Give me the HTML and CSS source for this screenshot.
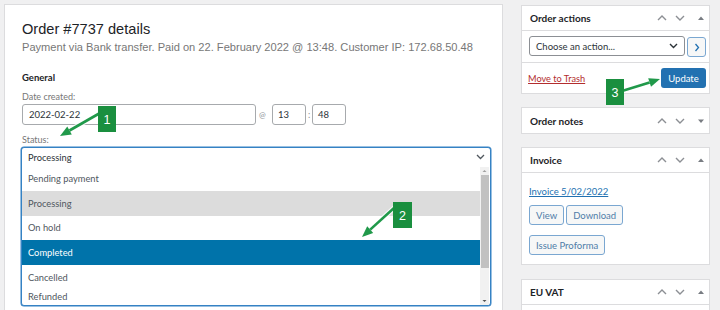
FILE: index.html
```html
<!DOCTYPE html>
<html>
<head>
<meta charset="utf-8">
<link rel="stylesheet" href="styles.css">
</head>
<body>
<div class="page">
  <div class="main">
    <h2 class="title">Order #7737 details</h2>
    <p class="sub">Payment via Bank transfer. Paid on 22. February 2022 @ 13:48. Customer IP: 172.68.50.48</p>
    <h3 class="section">General</h3>
    <div class="lbl lbl-date">Date created:</div>
    <div class="daterow">
      <div class="input date">2022-02-22</div>
      <span class="at">@</span>
      <div class="input hm">13</div>
      <span class="colon">:</span>
      <div class="input hm">48</div>
    </div>
    <div class="lbl lbl-status">Status:</div>
    <div class="dropdown">
      <div class="dd-head">
        <span>Processing</span>
        <svg class="dd-chev" width="9" height="6" viewBox="0 0 9 6"><path d="M1 1 L4.5 4.5 L8 1" fill="none" stroke="#50575e" stroke-width="1.3"/></svg>
      </div>
      <div class="dd-body">
        <ul class="dd-list">
          <li>Pending payment</li>
          <li class="hover">Processing</li>
          <li>On hold</li>
          <li class="selected">Completed</li>
          <li>Cancelled</li>
          <li>Refunded</li>
        </ul>
        <div class="scrollbar">
          <svg class="sb-arrow" width="9" height="8" viewBox="0 0 9 8"><path d="M2.5 5 L4.5 3 L6.5 5 Z" fill="#a0a0a0"/></svg>
          <div class="sb-thumb"></div>
          <div class="sb-space"></div>
          <svg class="sb-arrow" width="9" height="8" viewBox="0 0 9 8"><path d="M2.5 3 L4.5 5 L6.5 3 Z" fill="#505050"/></svg>
        </div>
      </div>
    </div>
  </div>

  <div class="side">
    <div class="box">
      <div class="box-head hb">
        <span class="box-title">Order actions</span>
        <span class="ctrls">
          <svg class="ic" width="18" height="10" viewBox="0 0 18 10"><path d="M5 7 L9 3 L13 7" fill="none" stroke="#8c8f94" stroke-width="1.4"/></svg>
          <svg class="ic" width="18" height="10" viewBox="0 0 18 10"><path d="M5 3 L9 7 L13 3" fill="none" stroke="#8c8f94" stroke-width="1.4"/></svg>
          <svg class="ic tri" width="16" height="10" viewBox="0 0 16 10"><path d="M5 7 L8 3.5 L11 7 Z" fill="#787c82"/></svg>
        </span>
      </div>
      <div class="oa-body">
        <div class="oa-select">
          <span>Choose an action...</span>
          <svg width="9" height="6" viewBox="0 0 9 6"><path d="M1 1 L4.5 4.5 L8 1" fill="none" stroke="#2c3338" stroke-width="1.4"/></svg>
        </div>
        <div class="oa-go">
          <svg width="6" height="9" viewBox="0 0 6 9"><path d="M1.5 1 L4.5 4.5 L1.5 8" fill="none" stroke="#2271b1" stroke-width="1.3"/></svg>
        </div>
      </div>
      <div class="oa-foot">
        <a class="trash">Move to Trash</a>
        <span class="btn-primary">Update</span>
      </div>
    </div>

    <div class="box">
      <div class="box-head">
        <span class="box-title">Order notes</span>
        <span class="ctrls">
          <svg class="ic" width="18" height="10" viewBox="0 0 18 10"><path d="M5 7 L9 3 L13 7" fill="none" stroke="#8c8f94" stroke-width="1.4"/></svg>
          <svg class="ic" width="18" height="10" viewBox="0 0 18 10"><path d="M5 3 L9 7 L13 3" fill="none" stroke="#8c8f94" stroke-width="1.4"/></svg>
          <svg class="ic tri" width="16" height="10" viewBox="0 0 16 10"><path d="M5 3.5 L8 7 L11 3.5 Z" fill="#787c82"/></svg>
        </span>
      </div>
    </div>

    <div class="box">
      <div class="box-head hb">
        <span class="box-title">Invoice</span>
        <span class="ctrls">
          <svg class="ic" width="18" height="10" viewBox="0 0 18 10"><path d="M5 7 L9 3 L13 7" fill="none" stroke="#8c8f94" stroke-width="1.4"/></svg>
          <svg class="ic" width="18" height="10" viewBox="0 0 18 10"><path d="M5 3 L9 7 L13 3" fill="none" stroke="#8c8f94" stroke-width="1.4"/></svg>
          <svg class="ic tri" width="16" height="10" viewBox="0 0 16 10"><path d="M5 7 L8 3.5 L11 7 Z" fill="#787c82"/></svg>
        </span>
      </div>
      <div class="inv-body">
        <a class="inv-link">Invoice 5/02/2022</a>
        <div class="btn-row first">
          <span class="btn">View</span>
          <span class="btn">Download</span>
        </div>
        <div class="btn-row">
          <span class="btn">Issue Proforma</span>
        </div>
      </div>
    </div>

    <div class="box last">
      <div class="box-head hb">
        <span class="box-title">EU VAT</span>
        <span class="ctrls">
          <svg class="ic" width="18" height="10" viewBox="0 0 18 10"><path d="M5 7 L9 3 L13 7" fill="none" stroke="#8c8f94" stroke-width="1.4"/></svg>
          <svg class="ic" width="18" height="10" viewBox="0 0 18 10"><path d="M5 3 L9 7 L13 3" fill="none" stroke="#8c8f94" stroke-width="1.4"/></svg>
          <svg class="ic tri" width="16" height="10" viewBox="0 0 16 10"><path d="M5 7 L8 3.5 L11 7 Z" fill="#787c82"/></svg>
        </span>
      </div>
      <div class="vat-body"></div>
    </div>
  </div>
</div>

<svg class="annot" width="720" height="310" viewBox="0 0 720 310">
  <g stroke="#ffffff" stroke-width="5" stroke-linecap="round" fill="none" opacity="0.8">
    <line x1="100" y1="113" x2="69.5" y2="130.5"/>
    <line x1="394" y1="208" x2="370.2" y2="229.6"/>
    <line x1="622" y1="91" x2="649.6" y2="82.5"/>
  </g>
  <g stroke="#20994a" stroke-width="2.6" fill="none">
    <line x1="100" y1="113" x2="69.5" y2="130.5"/>
    <line x1="394" y1="208" x2="370.2" y2="229.6"/>
    <line x1="622" y1="91" x2="649.6" y2="82.5"/>
  </g>
  <g fill="#20994a">
    <polygon points="60,136 71.8,134.4 67.3,126.6"/>
    <polygon points="362,237 373.2,232.9 367.2,226.3"/>
    <polygon points="660,79 648.2,78.2 651,86.8"/>
  </g>
  <g fill="#1a8f3f">
    <rect x="98" y="106" width="18" height="26"/>
    <rect x="393" y="202" width="19" height="26"/>
    <rect x="606" y="79" width="18" height="26"/>
  </g>
  <g fill="#ffffff" font-family="Liberation Sans, Arial, sans-serif" font-size="12.5" text-anchor="middle">
    <text x="107" y="124">1</text>
    <text x="402.5" y="220">2</text>
    <text x="615" y="97">3</text>
  </g>
</svg>
</body>
</html>
```

FILE: styles.css
```css
* { box-sizing: border-box; }

html, body {
  margin: 0;
  padding: 0;
}

body {
  width: 720px;
  height: 310px;
  overflow: hidden;
  background: #f0f0f1;
  font-family: "Lato", "Noto Sans", sans-serif;
  color: #2c3338;
  position: relative;
}

.page {
  display: flex;
  align-items: flex-start;
  padding: 4px 0 0 4px;
  height: 310px;
  overflow: hidden;
}

.main {
  width: 499px;
  height: 330px;
  flex-shrink: 0;
  background: #fff;
  border: 1px solid #dcdcde;
  padding: 15px 11px 0 17px;
  display: flex;
  flex-direction: column;
  align-items: flex-start;
}

.title {
  margin: 0;
  font-family: "Liberation Sans", Arial, sans-serif;
  font-weight: 400;
  font-size: 14.6px;
  line-height: 18px;
  color: #1d2327;
}

.sub {
  margin: 2px 0 0 0;
  font-family: "Liberation Sans", Arial, sans-serif;
  font-size: 11.1px;
  line-height: 14px;
  color: #777777;
  white-space: nowrap;
}

.section {
  margin: 18px 0 0 0;
  font-size: 9.5px;
  line-height: 12px;
  font-weight: 700;
  color: #1d2327;
}

.lbl {
  font-size: 9px;
  line-height: 12px;
  color: #777777;
}

.lbl-date { margin-top: 7px; }
.lbl-status { margin-top: 9px; }

.daterow {
  margin-top: 1px;
  display: flex;
  align-items: center;
}

.input {
  height: 21px;
  border: 1px solid #a7aaad;
  border-radius: 3px;
  font-size: 9.5px;
  color: #2c3338;
  display: flex;
  align-items: center;
  padding-left: 6px;
  background: #fff;
}

.input.date { width: 234px; }
.input.hm { width: 34px; padding-left: 5px; }

.at {
  width: 16px;
  font-size: 8px;
  color: #8c8f94;
  padding-left: 3px;
}

.colon {
  width: 6px;
  font-size: 9px;
  color: #8c8f94;
  text-align: center;
}

.dropdown {
  margin-top: 1px;
  margin-left: -1px;
  width: 470px;
  height: 159px;
  border: 1px solid #3582c4;
  box-shadow: 0 0 0 0.5px #3582c4;
  border-radius: 3px;
  display: flex;
  flex-direction: column;
  overflow: hidden;
  background: #fff;
}

.dd-head {
  height: 18.5px;
  flex-shrink: 0;
  display: flex;
  align-items: center;
  justify-content: space-between;
  padding: 0 5px 0 6px;
  font-size: 9.3px;
  color: #2c3338;
}

.dd-body {
  flex: 1;
  display: flex;
  min-height: 0;
}

.dd-list {
  list-style: none;
  margin: 0;
  padding: 0;
  flex: 1;
  overflow: hidden;
}

.dd-list li {
  height: 24.6px;
  display: flex;
  align-items: center;
  padding-left: 6px;
  font-size: 9.3px;
  color: #50575e;
}

.dd-list li:last-child {
  height: 14px;
  align-items: flex-start;
  padding-top: 2px;
  line-height: 11px;
}

.dd-list li.hover {
  background: #dcdcdc;
  color: #50575e;
}

.dd-list li.selected {
  background: #0073aa;
  color: #ffffff;
}

.scrollbar {
  width: 9px;
  flex-shrink: 0;
  background: #f1f1f1;
  display: flex;
  flex-direction: column;
  align-items: center;
  margin-right: 1px;
}

.sb-arrow { flex-shrink: 0; }

.sb-thumb {
  width: 8px;
  height: 93px;
  background: #c1c1c1;
  flex-shrink: 0;
}

.sb-space { flex: 1; }

/* Side column */
.side {
  margin-left: 18px;
  margin-top: 1px;
  width: 189px;
  flex-shrink: 0;
  display: flex;
  flex-direction: column;
  gap: 13px;
}

.box {
  background: #fff;
  border: 1px solid #dcdcde;
}

.box.last { margin-top: 1px; }

.box-head {
  height: 25px;
  display: flex;
  align-items: center;
  padding-left: 8px;
}

.box-head.hb {
  border-bottom: 1px solid #dcdcde;
}

.box-title {
  font-size: 10px;
  font-weight: 700;
  color: #1d2327;
  flex: 1;
}

.ctrls {
  display: flex;
  align-items: center;
}

.ic { display: block; }
.ic.tri { margin-left: 4px; }

.oa-body {
  display: flex;
  padding: 5px 3px 5px 7px;
  border-bottom: 1px solid #dcdcde;
}

.oa-select {
  width: 156px;
  height: 20px;
  border: 1px solid #8c8f94;
  border-radius: 3px;
  display: flex;
  align-items: center;
  justify-content: space-between;
  padding: 0 6px;
  font-size: 9.5px;
  color: #2c3338;
}

.oa-go {
  margin-left: 2px;
  width: 19px;
  height: 20px;
  margin-top: 1px;
  border: 1px solid #7aa7d1;
  border-radius: 3px;
  background: #f6f7f7;
  display: flex;
  align-items: center;
  justify-content: center;
}

.oa-foot {
  display: flex;
  align-items: center;
  justify-content: space-between;
  padding: 5px 3px 5px 6px;
}

.trash {
  font-size: 9.2px;
  color: #b32d2e;
  text-decoration: underline;
}

.btn-primary {
  width: 45px;
  height: 20px;
  background: #2271b1;
  border-radius: 3px;
  color: #fff;
  font-size: 9.5px;
  display: flex;
  align-items: center;
  justify-content: center;
}

.inv-body {
  padding: 13px 8px 9px 7px;
  display: flex;
  flex-direction: column;
  align-items: flex-start;
}

.inv-link {
  font-size: 9.5px;
  line-height: 12px;
  color: #2271b1;
  text-decoration: underline;
}

.btn-row {
  display: flex;
  gap: 2px;
  margin-top: 10px;
}

.btn-row.first { margin-top: 7px; }

.btn {
  height: 20px;
  padding: 0 6px;
  border: 1px solid #7aa7d1;
  border-radius: 3px;
  background: #f6f7f7;
  color: #4f7da8;
  font-size: 9.5px;
  display: flex;
  align-items: center;
}

.vat-body { height: 20px; }

.annot {
  position: absolute;
  left: 0;
  top: 0;
  pointer-events: none;
}
```
